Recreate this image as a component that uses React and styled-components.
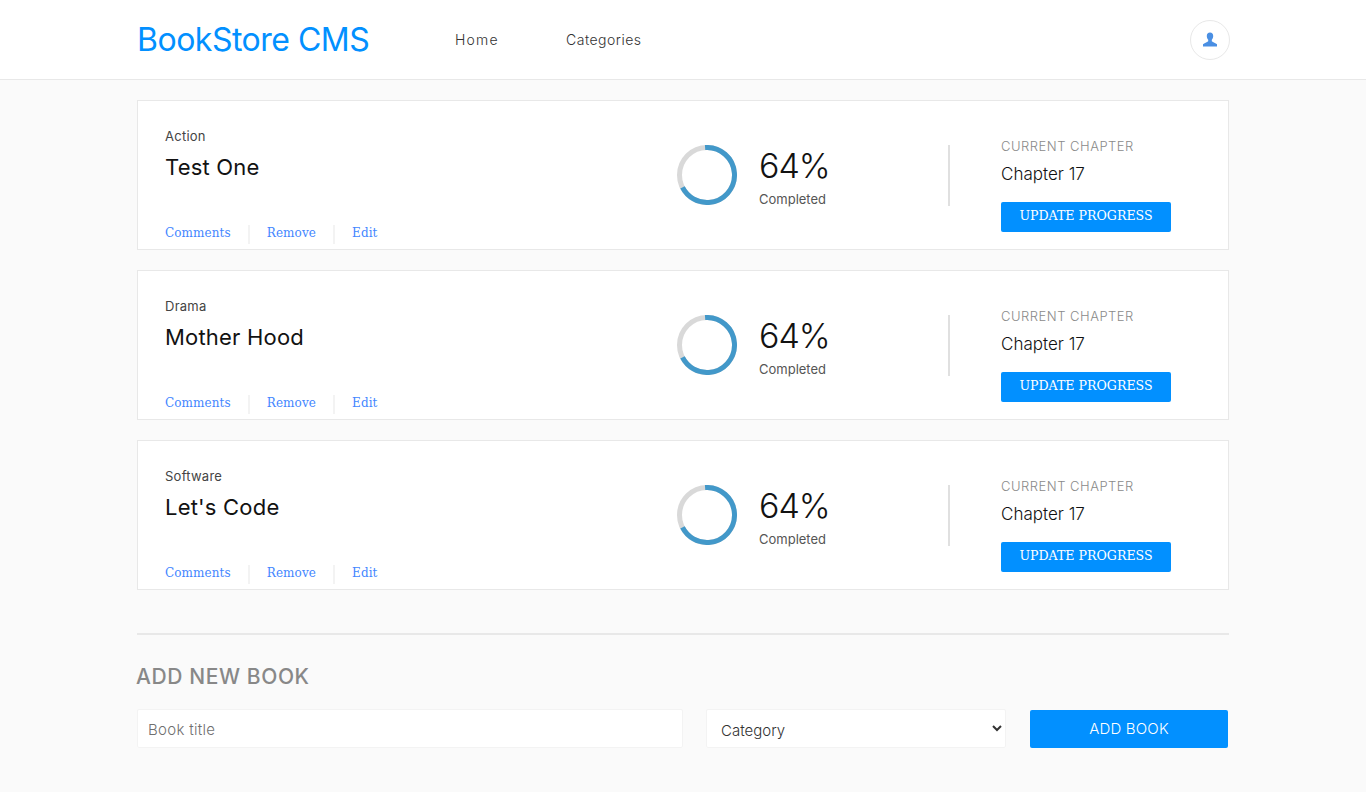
import React from "react";
import styled, { createGlobalStyle } from "styled-components";

const sans = '"Inter", "Noto Sans", sans-serif';
const serif = '"DejaVu Serif", "Liberation Serif", serif';

const GlobalStyle = createGlobalStyle`
  * {
    box-sizing: border-box;
  }

  body {
    margin: 0;
    background: #fafafa;
    font-family: ${sans};
  }
`;

const Header = styled.header`
  height: 80px;
  background: #fff;
  border-bottom: 1px solid #e8e8e8;
  padding: 0 136px 0 137px;
  display: flex;
  align-items: center;
`;

const Logo = styled.h1`
  margin: 0;
  width: 318px;
  font-size: 32px;
  font-weight: 400;
  letter-spacing: -0.5px;
  color: #0290ff;
`;

const NavLink = styled.a`
  width: ${(p) => p.$width}px;
  font-size: 14px;
  font-weight: 300;
  letter-spacing: ${(p) => p.$spacing}px;
  color: #333;
`;

const Avatar = styled.div`
  margin-left: auto;
  width: 40px;
  height: 40px;
  border: 1px solid #e8e8e8;
  border-radius: 50%;
  display: flex;
  align-items: center;
  justify-content: center;
  color: #4a8fe3;
`;

const Main = styled.main`
  width: 1092px;
  margin-left: 137px;
  padding-top: 20px;
`;

const BookList = styled.div`
  display: flex;
  flex-direction: column;
  gap: 20px;
`;

const Card = styled.article`
  height: 150px;
  background: #fff;
  border: 1px solid #e8e8e8;
  display: flex;
`;

const Info = styled.div`
  width: 539px;
  padding: 27px 0 5px 27px;
  display: flex;
  flex-direction: column;
`;

const Genre = styled.div`
  font-size: 13px;
  line-height: 16px;
  font-weight: 400;
  letter-spacing: 0.25px;
  color: #444;
`;

const Title = styled.h2`
  margin: 8px 0 0;
  font-size: 22px;
  line-height: 30px;
  font-weight: 400;
  letter-spacing: 0.2px;
  color: #121212;
`;

const Actions = styled.div`
  margin-top: auto;
  display: flex;
  align-items: center;
`;

const Action = styled.a`
  height: 19px;
  line-height: 17px;
  padding: 0 17px;
  font-family: ${serif};
  font-size: 12px;
  letter-spacing: 0.1px;
  color: #4386ff;
  border-right: 2px solid #f3f3f3;

  &:first-child {
    padding-left: 0;
  }

  &:last-child {
    border-right: none;
  }
`;

const Progress = styled.div`
  width: 273px;
  height: 61px;
  margin-top: 44px;
  border-right: 2px solid #e0e0e0;
  display: flex;
  align-items: center;
`;

const Ring = styled.svg`
  width: 60px;
  height: 60px;
  flex: none;
  margin-bottom: 2px;
`;

const ProgressText = styled.div`
  margin: 2px 0 0 22px;
  display: flex;
  flex-direction: column;
`;

const Percent = styled.div`
  font-size: 34px;
  line-height: 40px;
  font-weight: 300;
  letter-spacing: -1px;
  color: #121212;
`;

const Completed = styled.div`
  font-size: 13px;
  line-height: 16px;
  margin-top: 5px;
  color: #555;
`;

const Chapter = styled.div`
  margin-left: 51px;
  padding-top: 37px;
  display: flex;
  flex-direction: column;
  align-items: flex-start;
`;

const ChapterLabel = styled.div`
  font-size: 13px;
  line-height: 16px;
  font-weight: 300;
  letter-spacing: 0.5px;
  color: #8a8a8a;
`;

const ChapterName = styled.div`
  margin-top: 10px;
  font-size: 17px;
  line-height: 20px;
  font-weight: 300;
  color: #121212;
`;

const UpdateButton = styled.button`
  margin-top: 18px;
  width: 170px;
  height: 30px;
  padding: 0 0 4px;
  border: none;
  border-radius: 2px;
  background: #0290ff;
  color: #fff;
  font-family: ${serif};
  font-size: 12.6px;
`;

const Rule = styled.hr`
  margin: 43px 0 0;
  height: 2px;
  border: none;
  background: #e8e8e8;
`;

const FormTitle = styled.h3`
  margin: 30px 0 0 -1px;
  font-size: 21px;
  line-height: 24px;
  font-weight: 500;
  letter-spacing: 0.6px;
  color: #888;
`;

const AddForm = styled.form`
  margin-top: 20px;
  display: flex;
  align-items: center;
`;

const TitleInput = styled.input`
  width: 546px;
  height: 39px;
  padding: 2px 10px 0;
  border: 1px solid #f3f3f3;
  border-radius: 2px;
  background: #fff;
  font-family: ${sans};
  font-size: 15px;
  font-weight: 300;
  letter-spacing: 0.3px;

  &::placeholder {
    color: #6f6f6f;
    opacity: 1;
  }
`;

const CategorySelect = styled.select`
  width: 300px;
  height: 39px;
  margin-left: 23px;
  padding: 3px 0 0 10px;
  border: 1px solid #f3f3f3;
  border-radius: 2px;
  background: #fff;
  color: #333;
  font-family: ${sans};
  font-size: 15px;
  font-weight: 300;
`;

const AddButton = styled.button`
  width: 198px;
  height: 38px;
  margin-left: 24px;
  border: none;
  border-radius: 2px;
  background: #0290ff;
  color: #fff;
  font-family: ${sans};
  font-size: 15px;
  font-weight: 300;
  letter-spacing: 0.2px;
`;

const books = [
  { genre: "Action", title: "Test One" },
  { genre: "Drama", title: "Mother Hood" },
  { genre: "Software", title: "Let's Code" },
];

const radius = 27.5;
const circumference = 2 * Math.PI * radius;

// the arc in the design sweeps a bit further than the 64% it is labelled with
const ProgressRing = ({ sweep }) => (
  <Ring viewBox="0 0 60 60">
    <circle cx="30" cy="30" r={radius} fill="none" stroke="#d9d9d9" strokeWidth="5" />
    <circle
      cx="30"
      cy="30"
      r={radius}
      fill="none"
      stroke="#4298c9"
      strokeWidth="5"
      strokeDasharray={`${(circumference * sweep) / 100} ${circumference}`}
      transform="rotate(-94 30 30)"
    />
  </Ring>
);

const UserIcon = () => (
  <svg width="16" height="16" viewBox="0 0 16 16" fill="currentColor">
    <path d="M8 .5C5.900.5 4.800 2 4.800 4c0 1.500.5 2.900 1.400 3.700v1.500C5 10.300 2.200 10.800 1 12.300V14.500h14v-2.200c-1.200-1.500-4-2-5.200-3.100V7.700C10.700 6.900 11.200 5.500 11.200 4 11.200 2 10.100.5 8 .5z" />
  </svg>
);

const BookCard = ({ genre, title }) => (
  <Card>
    <Info>
      <Genre>{genre}</Genre>
      <Title>{title}</Title>
      <Actions>
        <Action>Comments</Action>
        <Action>Remove</Action>
        <Action>Edit</Action>
      </Actions>
    </Info>
    <Progress>
      <ProgressRing sweep={68.5} />
      <ProgressText>
        <Percent>64%</Percent>
        <Completed>Completed</Completed>
      </ProgressText>
    </Progress>
    <Chapter>
      <ChapterLabel>CURRENT CHAPTER</ChapterLabel>
      <ChapterName>Chapter 17</ChapterName>
      <UpdateButton type="button">UPDATE PROGRESS</UpdateButton>
    </Chapter>
  </Card>
);

const App = () => (
  <>
    <GlobalStyle />
    <Header>
      <Logo>BookStore CMS</Logo>
      <NavLink $width={111} $spacing={1.2}>Home</NavLink>
      <NavLink $width={90} $spacing={0.5}>Categories</NavLink>
      <Avatar>
        <UserIcon />
      </Avatar>
    </Header>
    <Main>
      <BookList>
        {books.map((book) => (
          <BookCard key={book.title} {...book} />
        ))}
      </BookList>
      <Rule />
      <FormTitle>ADD NEW BOOK</FormTitle>
      <AddForm>
        <TitleInput placeholder="Book title" />
        <CategorySelect defaultValue="">
          <option value="">Category</option>
        </CategorySelect>
        <AddButton type="button">ADD BOOK</AddButton>
      </AddForm>
    </Main>
  </>
);

export default App;
